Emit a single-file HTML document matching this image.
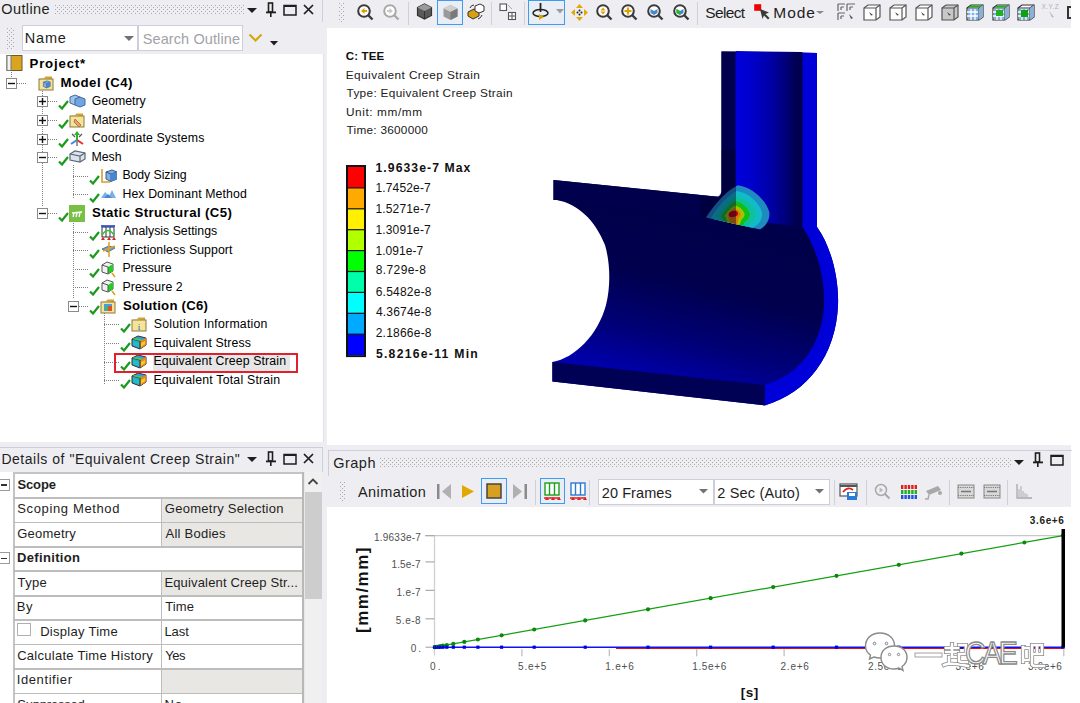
<!DOCTYPE html>
<html><head><meta charset="utf-8"><style>
html,body{margin:0;padding:0;}
body{width:1080px;height:703px;overflow:hidden;position:relative;background:#fff;font-family:"Liberation Sans",sans-serif;}
div{position:absolute;}
.t{white-space:nowrap;}
</style></head><body>
<div style="left:0px;top:0px;width:327px;height:703px;background:#eeeef2;"></div>
<div style="left:327px;top:0px;width:744px;height:28px;background:#eeeef2;"></div>
<div style="left:327px;top:445px;width:744px;height:62px;background:#eeeef2;"></div>
<div style="left:0px;top:54px;width:323px;height:388px;background:#fff;"></div>
<div style="left:0px;top:472px;width:305px;height:231px;background:#fff;"></div>
<div class="t" style="left:1.3px;top:1.9px;font-size:14.5px;line-height:14.5px;letter-spacing:0.396px;color:#1e1e1e;">Outline</div>
<svg style="position:absolute;left:55px;top:5px;" width="189" height="10" viewBox="0 0 189 10"><defs><pattern id="gp" width="4" height="4" patternUnits="userSpaceOnUse"><rect x="0" y="0" width="1" height="1" fill="#a9a9b0"/><rect x="2" y="2" width="1" height="1" fill="#a9a9b0"/></pattern></defs><rect width="189" height="10" fill="url(#gp)"/></svg>
<svg style="position:absolute;left:246.5px;top:7px;" width="11" height="7" viewBox="0 0 11 7"><path d="M0 1 L10 1 L5 6 Z" fill="#1e1e1e"/></svg>
<svg style="position:absolute;left:264.5px;top:2px;" width="12" height="15" viewBox="0 0 12 15"><rect x="3.5" y="1" width="4" height="9" fill="none" stroke="#1e1e1e" stroke-width="1.6"/><rect x="1" y="9.5" width="10" height="1.8" fill="#1e1e1e"/><rect x="5" y="11" width="1.6" height="4" fill="#1e1e1e"/></svg>
<svg style="position:absolute;left:282.5px;top:4px;" width="14" height="12" viewBox="0 0 14 12"><rect x="1" y="1.5" width="12" height="9.5" fill="none" stroke="#1e1e1e" stroke-width="1.5"/><rect x="1" y="1" width="12" height="2" fill="#1e1e1e"/></svg>
<svg style="position:absolute;left:302.5px;top:4px;" width="11" height="11" viewBox="0 0 11 11"><path d="M1 1 L10 10 M10 1 L1 10" stroke="#1e1e1e" stroke-width="1.7"/></svg>
<div style="left:322px;top:0px;width:1px;height:22px;background:#cccedb;"></div>
<svg style="position:absolute;left:7px;top:28px;" width="8" height="21" viewBox="0 0 8 21"><defs><pattern id="gp2" width="4" height="4" patternUnits="userSpaceOnUse"><rect x="0" y="0" width="1" height="1" fill="#a9a9b0"/><rect x="2" y="2" width="1" height="1" fill="#a9a9b0"/></pattern></defs><rect width="8" height="21" fill="url(#gp2)"/></svg>
<div style="left:22px;top:25px;width:116px;height:26px;box-sizing:border-box;border:1px solid #cccedb;background:#fff;"></div>
<div class="t" style="left:24.8px;top:30.7px;font-size:14.5px;line-height:14.5px;letter-spacing:0.811px;color:#1e1e1e;">Name</div>
<svg style="position:absolute;left:124px;top:36px;" width="10" height="6" viewBox="0 0 10 6"><path d="M0 0 L10 0 L5 5 Z" fill="#717171"/></svg>
<div style="left:138px;top:25px;width:105px;height:26px;box-sizing:border-box;border:1px solid #cccedb;background:#fff;"></div>
<div class="t" style="left:142.7px;top:31.5px;font-size:14.5px;line-height:14.5px;letter-spacing:0.104px;color:#a2a2a8;">Search Outline</div>
<svg style="position:absolute;left:248px;top:33px;" width="15" height="10" viewBox="0 0 15 10"><path d="M1.5 1.5 L7.5 7.5 L13.5 1.5" fill="none" stroke="#d3a70f" stroke-width="2.2"/></svg>
<svg style="position:absolute;left:270px;top:41px;" width="9" height="5" viewBox="0 0 9 5"><path d="M0 0 L8 0 L4 4.5 Z" fill="#1e1e1e"/></svg>
<svg style="position:absolute;left:11px;top:72px;" width="1" height="5" viewBox="0 0 1 5"><line x1="0.5" y1="0" x2="0.5" y2="5" stroke="#808080" stroke-width="1" stroke-dasharray="1 1"/></svg>
<svg style="position:absolute;left:42px;top:91px;" width="1" height="115" viewBox="0 0 1 115"><line x1="0.5" y1="0" x2="0.5" y2="115" stroke="#808080" stroke-width="1" stroke-dasharray="1 1"/></svg>
<svg style="position:absolute;left:73px;top:165px;" width="1" height="33" viewBox="0 0 1 33"><line x1="0.5" y1="0" x2="0.5" y2="33" stroke="#808080" stroke-width="1" stroke-dasharray="1 1"/></svg>
<svg style="position:absolute;left:73px;top:221px;" width="1" height="78" viewBox="0 0 1 78"><line x1="0.5" y1="0" x2="0.5" y2="78" stroke="#808080" stroke-width="1" stroke-dasharray="1 1"/></svg>
<svg style="position:absolute;left:104px;top:313px;" width="1" height="71" viewBox="0 0 1 71"><line x1="0.5" y1="0" x2="0.5" y2="71" stroke="#808080" stroke-width="1" stroke-dasharray="1 1"/></svg>
<div style="left:152.6px;top:355px;width:137px;height:15.5px;background:#e6e6e6;"></div>
<svg style="position:absolute;left:6px;top:55px;" width="17" height="17" viewBox="0 0 17 17"><rect x="1" y="0.5" width="15" height="15" fill="#d9a521" stroke="#6b5a30" stroke-width="1"/><rect x="1" y="0.5" width="4" height="15" fill="#f2f2f2" stroke="#777" stroke-width="1"/></svg>
<div class="t" style="left:29.5px;top:57.1px;font-size:13.2px;line-height:13.2px;letter-spacing:0.833px;color:#000;font-weight:bold;">Project*</div>
<svg style="position:absolute;left:38px;top:75px;" width="17" height="17" viewBox="0 0 17 17"><path d="M1 3 L6 3 L7.5 1.5 L14 1.5 L14 4 Z" fill="#d6a32a"/><rect x="1" y="4" width="14" height="11" fill="#f6e39a" stroke="#8b7a3a" stroke-width="1"/><g transform="translate(3.5,4) scale(0.62)"><path d="M3 5 L9 3 L14 5 L14 12 L8 14.5 L3 12 Z" fill="#7fb0e8" stroke="#3a5f8a" stroke-width="1"/><path d="M3 5 L8 7 L14 5" fill="none" stroke="#3a5f8a" stroke-width="1"/><path d="M8 7 L8 14.5" stroke="#3a5f8a" stroke-width="1"/><path d="M8 7 L14 5 L14 12 L8 14.5Z" fill="#4a86d0"/></g></svg>
<div style="left:6px;top:78px;width:11px;height:11px;box-sizing:border-box;border:1px solid #8a8a8a;background:#fff;"></div>
<svg style="position:absolute;left:8px;top:80px;" width="7" height="7" viewBox="0 0 7 7"><path d="M0 3.5 L7 3.5" stroke="#111" stroke-width="1.4"/></svg>
<svg style="position:absolute;left:17px;top:83px;" width="10" height="1" viewBox="0 0 10 1"><line x1="0" y1="0.5" x2="10" y2="0.5" stroke="#808080" stroke-width="1" stroke-dasharray="1 1"/></svg>
<div class="t" style="left:60.5px;top:75.7px;font-size:13.2px;line-height:13.2px;letter-spacing:0.500px;color:#000;font-weight:bold;">Model (C4)</div>
<svg style="position:absolute;left:69px;top:93px;" width="17" height="17" viewBox="0 0 17 17"><path d="M1 4 L6 2 L11 4 L11 10 L6 12 L1 10 Z" fill="#9cc3ee" stroke="#47699a"/><path d="M6 6 L11 4 L16 6 L16 12 L11 14 L6 12 Z" fill="#6fa5e3" stroke="#47699a"/></svg>
<svg style="position:absolute;left:58px;top:100px;" width="11" height="10" viewBox="0 0 11 10"><path d="M1 5.5 L4 8.5 L10 1" fill="none" stroke="#1a9a1a" stroke-width="2.2"/></svg>
<div style="left:37px;top:96px;width:11px;height:11px;box-sizing:border-box;border:1px solid #8a8a8a;background:#fff;"></div>
<svg style="position:absolute;left:39px;top:98px;" width="7" height="7" viewBox="0 0 7 7"><path d="M0 3.5 L7 3.5" stroke="#111" stroke-width="1.4"/><path d="M3.5 0 L3.5 7" stroke="#111" stroke-width="1.4"/></svg>
<svg style="position:absolute;left:48px;top:101px;" width="10" height="1" viewBox="0 0 10 1"><line x1="0" y1="0.5" x2="10" y2="0.5" stroke="#808080" stroke-width="1" stroke-dasharray="1 1"/></svg>
<div class="t" style="left:91.8px;top:95.0px;font-size:12.3px;line-height:12.3px;letter-spacing:-0.007px;color:#000;">Geometry</div>
<svg style="position:absolute;left:69px;top:112px;" width="17" height="17" viewBox="0 0 17 17"><path d="M1 3 L6 3 L7.5 1.5 L14 1.5 L14 4 Z" fill="#d6a32a"/><rect x="1" y="4" width="14" height="11" fill="#f6e39a" stroke="#8b7a3a" stroke-width="1"/><path d="M6 7 L12 13 L10 15 L5 10Z" fill="#f0a070" stroke="#9a6a3a" stroke-width="0.8"/></svg>
<svg style="position:absolute;left:58px;top:119px;" width="11" height="10" viewBox="0 0 11 10"><path d="M1 5.5 L4 8.5 L10 1" fill="none" stroke="#1a9a1a" stroke-width="2.2"/></svg>
<div style="left:37px;top:115px;width:11px;height:11px;box-sizing:border-box;border:1px solid #8a8a8a;background:#fff;"></div>
<svg style="position:absolute;left:39px;top:117px;" width="7" height="7" viewBox="0 0 7 7"><path d="M0 3.5 L7 3.5" stroke="#111" stroke-width="1.4"/><path d="M3.5 0 L3.5 7" stroke="#111" stroke-width="1.4"/></svg>
<svg style="position:absolute;left:48px;top:120px;" width="10" height="1" viewBox="0 0 10 1"><line x1="0" y1="0.5" x2="10" y2="0.5" stroke="#808080" stroke-width="1" stroke-dasharray="1 1"/></svg>
<div class="t" style="left:91.4px;top:113.6px;font-size:12.3px;line-height:12.3px;letter-spacing:0.055px;color:#000;">Materials</div>
<svg style="position:absolute;left:69px;top:131px;" width="17" height="17" viewBox="0 0 17 17"><path d="M8 1 L8 9" stroke="#2ab52a" stroke-width="2"/><path d="M5 4 L8 0 L11 4Z" fill="#2ab52a"/><path d="M8 9 L14 13" stroke="#e83030" stroke-width="2"/><path d="M8 9 L2 13" stroke="#3a8ae0" stroke-width="2"/><path d="M3 3 L6 6 M13 3 L10 6" stroke="#555" stroke-width="1.2"/><path d="M8 10 L8 15" stroke="#777" stroke-width="1.5"/></svg>
<svg style="position:absolute;left:58px;top:138px;" width="11" height="10" viewBox="0 0 11 10"><path d="M1 5.5 L4 8.5 L10 1" fill="none" stroke="#1a9a1a" stroke-width="2.2"/></svg>
<div style="left:37px;top:134px;width:11px;height:11px;box-sizing:border-box;border:1px solid #8a8a8a;background:#fff;"></div>
<svg style="position:absolute;left:39px;top:136px;" width="7" height="7" viewBox="0 0 7 7"><path d="M0 3.5 L7 3.5" stroke="#111" stroke-width="1.4"/><path d="M3.5 0 L3.5 7" stroke="#111" stroke-width="1.4"/></svg>
<svg style="position:absolute;left:48px;top:139px;" width="10" height="1" viewBox="0 0 10 1"><line x1="0" y1="0.5" x2="10" y2="0.5" stroke="#808080" stroke-width="1" stroke-dasharray="1 1"/></svg>
<div class="t" style="left:91.8px;top:132.2px;font-size:12.3px;line-height:12.3px;letter-spacing:0.105px;color:#000;">Coordinate Systems</div>
<svg style="position:absolute;left:69px;top:149px;" width="17" height="17" viewBox="0 0 17 17"><path d="M1 5 L6 2 L16 4 L16 10 L11 13 L1 11 Z" fill="#dde3ea" stroke="#5a6a7a" stroke-width="1.2"/><path d="M1 5 L11 7 L16 4 M11 7 L11 13" fill="none" stroke="#5a6a7a" stroke-width="1.2"/></svg>
<svg style="position:absolute;left:58px;top:156px;" width="11" height="10" viewBox="0 0 11 10"><path d="M1 5.5 L4 8.5 L10 1" fill="none" stroke="#1a9a1a" stroke-width="2.2"/></svg>
<div style="left:37px;top:152px;width:11px;height:11px;box-sizing:border-box;border:1px solid #8a8a8a;background:#fff;"></div>
<svg style="position:absolute;left:39px;top:154px;" width="7" height="7" viewBox="0 0 7 7"><path d="M0 3.5 L7 3.5" stroke="#111" stroke-width="1.4"/></svg>
<svg style="position:absolute;left:48px;top:157px;" width="10" height="1" viewBox="0 0 10 1"><line x1="0" y1="0.5" x2="10" y2="0.5" stroke="#808080" stroke-width="1" stroke-dasharray="1 1"/></svg>
<div class="t" style="left:91.4px;top:150.7px;font-size:12.3px;line-height:12.3px;letter-spacing:0.070px;color:#000;">Mesh</div>
<svg style="position:absolute;left:100px;top:168px;" width="17" height="17" viewBox="0 0 17 17"><path d="M2 1 L2 14 L10 14" fill="none" stroke="#d0a030" stroke-width="1.6"/><g transform="translate(3,-1)"><path d="M3 5 L9 3 L14 5 L14 12 L8 14.5 L3 12 Z" fill="#7fb0e8" stroke="#3a5f8a" stroke-width="1"/><path d="M3 5 L8 7 L14 5" fill="none" stroke="#3a5f8a" stroke-width="1"/><path d="M8 7 L8 14.5" stroke="#3a5f8a" stroke-width="1"/><path d="M8 7 L14 5 L14 12 L8 14.5Z" fill="#4a86d0"/></g></svg>
<svg style="position:absolute;left:89px;top:175px;" width="11" height="10" viewBox="0 0 11 10"><path d="M1 5.5 L4 8.5 L10 1" fill="none" stroke="#1a9a1a" stroke-width="2.2"/></svg>
<svg style="position:absolute;left:73px;top:176px;" width="16" height="1" viewBox="0 0 16 1"><line x1="0" y1="0.5" x2="16" y2="0.5" stroke="#808080" stroke-width="1" stroke-dasharray="1 1"/></svg>
<div class="t" style="left:122.4px;top:169.3px;font-size:12.3px;line-height:12.3px;letter-spacing:-0.066px;color:#000;">Body Sizing</div>
<svg style="position:absolute;left:100px;top:186px;" width="17" height="17" viewBox="0 0 17 17"><path d="M1 12 L5 6 L9 10 L12 4 L16 12 Z" fill="#7ab0ea"/><path d="M4 12 L8 8 L12 12Z" fill="#4a86d0"/></svg>
<svg style="position:absolute;left:89px;top:193px;" width="11" height="10" viewBox="0 0 11 10"><path d="M1 5.5 L4 8.5 L10 1" fill="none" stroke="#1a9a1a" stroke-width="2.2"/></svg>
<svg style="position:absolute;left:73px;top:194px;" width="16" height="1" viewBox="0 0 16 1"><line x1="0" y1="0.5" x2="16" y2="0.5" stroke="#808080" stroke-width="1" stroke-dasharray="1 1"/></svg>
<div class="t" style="left:122.4px;top:187.9px;font-size:12.3px;line-height:12.3px;letter-spacing:0.113px;color:#000;">Hex Dominant Method</div>
<svg style="position:absolute;left:69px;top:205px;" width="17" height="17" viewBox="0 0 17 17"><rect x="0" y="0" width="16" height="17" fill="#78c043"/><path d="M3 8 L13 7 M5 8 L4 12 M8 8 L7 12 M11 8 L10 12" stroke="#fff" stroke-width="1.3"/></svg>
<svg style="position:absolute;left:58px;top:212px;" width="11" height="10" viewBox="0 0 11 10"><path d="M1 5.5 L4 8.5 L10 1" fill="none" stroke="#1a9a1a" stroke-width="2.2"/></svg>
<div style="left:37px;top:208px;width:11px;height:11px;box-sizing:border-box;border:1px solid #8a8a8a;background:#fff;"></div>
<svg style="position:absolute;left:39px;top:210px;" width="7" height="7" viewBox="0 0 7 7"><path d="M0 3.5 L7 3.5" stroke="#111" stroke-width="1.4"/></svg>
<svg style="position:absolute;left:48px;top:213px;" width="10" height="1" viewBox="0 0 10 1"><line x1="0" y1="0.5" x2="10" y2="0.5" stroke="#808080" stroke-width="1" stroke-dasharray="1 1"/></svg>
<div class="t" style="left:92.0px;top:205.7px;font-size:13.2px;line-height:13.2px;letter-spacing:0.418px;color:#000;font-weight:bold;">Static Structural (C5)</div>
<svg style="position:absolute;left:100px;top:224px;" width="17" height="17" viewBox="0 0 17 17"><rect x="2" y="3" width="12" height="10" fill="none" stroke="#333" stroke-width="1"/><path d="M6 3 L6 13 M10 3 L10 13" stroke="#333" stroke-width="1"/><path d="M1 2 L15 2" stroke="#2040e0" stroke-width="1.6"/><path d="M2 11 Q8 2 14 11" fill="none" stroke="#30c030" stroke-width="1.6"/><path d="M1 16 L3 13 L5 16Z M7 16 L9 13 L11 16Z M12 16 L14 13 L16 16Z" fill="#e02020"/></svg>
<svg style="position:absolute;left:89px;top:231px;" width="11" height="10" viewBox="0 0 11 10"><path d="M1 5.5 L4 8.5 L10 1" fill="none" stroke="#1a9a1a" stroke-width="2.2"/></svg>
<svg style="position:absolute;left:73px;top:232px;" width="16" height="1" viewBox="0 0 16 1"><line x1="0" y1="0.5" x2="16" y2="0.5" stroke="#808080" stroke-width="1" stroke-dasharray="1 1"/></svg>
<div class="t" style="left:123.4px;top:225.1px;font-size:12.3px;line-height:12.3px;letter-spacing:0.006px;color:#000;">Analysis Settings</div>
<svg style="position:absolute;left:100px;top:242px;" width="17" height="17" viewBox="0 0 17 17"><path d="M2 7 L9 4 L15 6 L8 10 Z" fill="#6aa0e0" stroke="#3a5f8a" stroke-width="0.8"/><path d="M9 0 L9 15 M3 9 L15 4" stroke="#e0a020" stroke-width="1.5"/></svg>
<svg style="position:absolute;left:89px;top:249px;" width="11" height="10" viewBox="0 0 11 10"><path d="M1 5.5 L4 8.5 L10 1" fill="none" stroke="#1a9a1a" stroke-width="2.2"/></svg>
<svg style="position:absolute;left:73px;top:250px;" width="16" height="1" viewBox="0 0 16 1"><line x1="0" y1="0.5" x2="16" y2="0.5" stroke="#808080" stroke-width="1" stroke-dasharray="1 1"/></svg>
<div class="t" style="left:122.4px;top:243.6px;font-size:12.3px;line-height:12.3px;letter-spacing:0.069px;color:#000;">Frictionless Support</div>
<svg style="position:absolute;left:100px;top:261px;" width="17" height="17" viewBox="0 0 17 17"><path d="M2 4 L7 1 L13 3 L13 10 L8 13 L2 11 Z" fill="#f0f0f0" stroke="#555" stroke-width="1"/><path d="M8 6 L13 3 L13 10 L8 13Z" fill="#20d020"/><path d="M2 4 L8 6 L8 13" fill="none" stroke="#555" stroke-width="1"/><path d="M12 12 L15 16" stroke="#e0a020" stroke-width="1.6"/></svg>
<svg style="position:absolute;left:89px;top:268px;" width="11" height="10" viewBox="0 0 11 10"><path d="M1 5.5 L4 8.5 L10 1" fill="none" stroke="#1a9a1a" stroke-width="2.2"/></svg>
<svg style="position:absolute;left:73px;top:269px;" width="16" height="1" viewBox="0 0 16 1"><line x1="0" y1="0.5" x2="16" y2="0.5" stroke="#808080" stroke-width="1" stroke-dasharray="1 1"/></svg>
<div class="t" style="left:122.4px;top:262.2px;font-size:12.3px;line-height:12.3px;letter-spacing:-0.009px;color:#000;">Pressure</div>
<svg style="position:absolute;left:100px;top:279px;" width="17" height="17" viewBox="0 0 17 17"><path d="M2 4 L7 1 L13 3 L13 10 L8 13 L2 11 Z" fill="#f0f0f0" stroke="#555" stroke-width="1"/><path d="M8 6 L13 3 L13 10 L8 13Z" fill="#20d020"/><path d="M2 4 L8 6 L8 13" fill="none" stroke="#555" stroke-width="1"/><path d="M12 12 L15 16" stroke="#e0a020" stroke-width="1.6"/></svg>
<svg style="position:absolute;left:89px;top:286px;" width="11" height="10" viewBox="0 0 11 10"><path d="M1 5.5 L4 8.5 L10 1" fill="none" stroke="#1a9a1a" stroke-width="2.2"/></svg>
<svg style="position:absolute;left:73px;top:287px;" width="16" height="1" viewBox="0 0 16 1"><line x1="0" y1="0.5" x2="16" y2="0.5" stroke="#808080" stroke-width="1" stroke-dasharray="1 1"/></svg>
<div class="t" style="left:122.4px;top:280.8px;font-size:12.3px;line-height:12.3px;letter-spacing:0.095px;color:#000;">Pressure 2</div>
<svg style="position:absolute;left:100px;top:298px;" width="17" height="17" viewBox="0 0 17 17"><path d="M1 3 L6 3 L7.5 1.5 L14 1.5 L14 4 Z" fill="#d6a32a"/><rect x="1" y="4" width="14" height="11" fill="#f6e39a" stroke="#8b7a3a" stroke-width="1"/><rect x="4" y="6" width="8" height="7" fill="#40a0e0"/><rect x="8" y="8" width="4" height="5" fill="#e05030"/><rect x="5" y="9" width="3" height="3" fill="#40c040"/></svg>
<svg style="position:absolute;left:89px;top:305px;" width="11" height="10" viewBox="0 0 11 10"><path d="M1 5.5 L4 8.5 L10 1" fill="none" stroke="#1a9a1a" stroke-width="2.2"/></svg>
<div style="left:68px;top:301px;width:11px;height:11px;box-sizing:border-box;border:1px solid #8a8a8a;background:#fff;"></div>
<svg style="position:absolute;left:70px;top:303px;" width="7" height="7" viewBox="0 0 7 7"><path d="M0 3.5 L7 3.5" stroke="#111" stroke-width="1.4"/></svg>
<svg style="position:absolute;left:79px;top:306px;" width="10" height="1" viewBox="0 0 10 1"><line x1="0" y1="0.5" x2="10" y2="0.5" stroke="#808080" stroke-width="1" stroke-dasharray="1 1"/></svg>
<div class="t" style="left:123.0px;top:298.6px;font-size:13.2px;line-height:13.2px;letter-spacing:0.246px;color:#000;font-weight:bold;">Solution (C6)</div>
<svg style="position:absolute;left:131px;top:316px;" width="17" height="17" viewBox="0 0 17 17"><path d="M1 3 L6 3 L7.5 1.5 L14 1.5 L14 4 Z" fill="#d6a32a"/><rect x="1" y="4" width="14" height="11" fill="#f6e39a" stroke="#8b7a3a" stroke-width="1"/><text x="8" y="14" font-size="9" font-family="Liberation Serif" fill="#2060c0" text-anchor="middle">i</text></svg>
<svg style="position:absolute;left:120px;top:323px;" width="11" height="10" viewBox="0 0 11 10"><path d="M1 5.5 L4 8.5 L10 1" fill="none" stroke="#1a9a1a" stroke-width="2.2"/></svg>
<svg style="position:absolute;left:104px;top:324px;" width="16" height="1" viewBox="0 0 16 1"><line x1="0" y1="0.5" x2="16" y2="0.5" stroke="#808080" stroke-width="1" stroke-dasharray="1 1"/></svg>
<div class="t" style="left:153.8px;top:318.0px;font-size:12.3px;line-height:12.3px;letter-spacing:0.223px;color:#000;">Solution Information</div>
<svg style="position:absolute;left:131px;top:335px;" width="17" height="17" viewBox="0 0 17 17"><path d="M1 4 L7 1 L15 3 L15 10 L9 14 L1 11 Z" fill="#30a0e0" stroke="#333" stroke-width="1"/><path d="M9 6 L15 3 L15 10 L9 14Z" fill="#f08020"/><path d="M1 4 L9 6 L9 14" fill="none" stroke="#333" stroke-width="1"/><path d="M4 3 L11 4.5 L9 6 L1 4Z" fill="#40d040"/><path d="M10 8 L14 6 L14 9 L10 12Z" fill="#f0d020"/><path d="M2 6 L8 8 L8 12 L2 10Z" fill="#20c0c0"/></svg>
<svg style="position:absolute;left:120px;top:342px;" width="11" height="10" viewBox="0 0 11 10"><path d="M1 5.5 L4 8.5 L10 1" fill="none" stroke="#1a9a1a" stroke-width="2.2"/></svg>
<svg style="position:absolute;left:104px;top:343px;" width="16" height="1" viewBox="0 0 16 1"><line x1="0" y1="0.5" x2="16" y2="0.5" stroke="#808080" stroke-width="1" stroke-dasharray="1 1"/></svg>
<div class="t" style="left:153.4px;top:336.5px;font-size:12.3px;line-height:12.3px;letter-spacing:0.114px;color:#000;">Equivalent Stress</div>
<svg style="position:absolute;left:131px;top:354px;" width="17" height="17" viewBox="0 0 17 17"><path d="M1 4 L7 1 L15 3 L15 10 L9 14 L1 11 Z" fill="#30a0e0" stroke="#333" stroke-width="1"/><path d="M9 6 L15 3 L15 10 L9 14Z" fill="#f08020"/><path d="M1 4 L9 6 L9 14" fill="none" stroke="#333" stroke-width="1"/><path d="M4 3 L11 4.5 L9 6 L1 4Z" fill="#40d040"/><path d="M10 8 L14 6 L14 9 L10 12Z" fill="#f0d020"/><path d="M2 6 L8 8 L8 12 L2 10Z" fill="#20c0c0"/></svg>
<svg style="position:absolute;left:120px;top:361px;" width="11" height="10" viewBox="0 0 11 10"><path d="M1 5.5 L4 8.5 L10 1" fill="none" stroke="#1a9a1a" stroke-width="2.2"/></svg>
<svg style="position:absolute;left:104px;top:362px;" width="16" height="1" viewBox="0 0 16 1"><line x1="0" y1="0.5" x2="16" y2="0.5" stroke="#808080" stroke-width="1" stroke-dasharray="1 1"/></svg>
<div class="t" style="left:153.4px;top:355.1px;font-size:12.3px;line-height:12.3px;letter-spacing:0.123px;color:#000;">Equivalent Creep Strain</div>
<svg style="position:absolute;left:131px;top:372px;" width="17" height="17" viewBox="0 0 17 17"><path d="M1 4 L7 1 L15 3 L15 10 L9 14 L1 11 Z" fill="#30a0e0" stroke="#333" stroke-width="1"/><path d="M9 6 L15 3 L15 10 L9 14Z" fill="#f08020"/><path d="M1 4 L9 6 L9 14" fill="none" stroke="#333" stroke-width="1"/><path d="M4 3 L11 4.5 L9 6 L1 4Z" fill="#40d040"/><path d="M10 8 L14 6 L14 9 L10 12Z" fill="#f0d020"/><path d="M2 6 L8 8 L8 12 L2 10Z" fill="#20c0c0"/></svg>
<svg style="position:absolute;left:120px;top:379px;" width="11" height="10" viewBox="0 0 11 10"><path d="M1 5.5 L4 8.5 L10 1" fill="none" stroke="#1a9a1a" stroke-width="2.2"/></svg>
<svg style="position:absolute;left:104px;top:380px;" width="16" height="1" viewBox="0 0 16 1"><line x1="0" y1="0.5" x2="16" y2="0.5" stroke="#808080" stroke-width="1" stroke-dasharray="1 1"/></svg>
<div class="t" style="left:153.4px;top:373.7px;font-size:12.3px;line-height:12.3px;letter-spacing:0.210px;color:#000;">Equivalent Total Strain</div>
<div style="left:113.5px;top:352.5px;width:184px;height:20.5px;box-sizing:border-box;border:2px solid #e0202a;background:transparent;"></div>
<div style="left:323px;top:54px;width:1px;height:388px;background:#e0e0e6;"></div>
<div style="left:0px;top:447px;width:323px;height:1px;background:#cccedb;"></div>
<div style="left:322px;top:447px;width:1px;height:25px;background:#cccedb;"></div>
<div class="t" style="left:1.4px;top:451.5px;font-size:14px;line-height:14px;letter-spacing:0.523px;color:#1e1e1e;">Details of &quot;Equivalent Creep Strain&quot;</div>
<svg style="position:absolute;left:246.5px;top:456px;" width="11" height="7" viewBox="0 0 11 7"><path d="M0 1 L10 1 L5 6 Z" fill="#1e1e1e"/></svg>
<svg style="position:absolute;left:264.5px;top:451px;" width="12" height="15" viewBox="0 0 12 15"><rect x="3.5" y="1" width="4" height="9" fill="none" stroke="#1e1e1e" stroke-width="1.6"/><rect x="1" y="9.5" width="10" height="1.8" fill="#1e1e1e"/><rect x="5" y="11" width="1.6" height="4" fill="#1e1e1e"/></svg>
<svg style="position:absolute;left:282.5px;top:453px;" width="14" height="12" viewBox="0 0 14 12"><rect x="1" y="1.5" width="12" height="9.5" fill="none" stroke="#1e1e1e" stroke-width="1.5"/><rect x="1" y="1" width="12" height="2" fill="#1e1e1e"/></svg>
<svg style="position:absolute;left:302.5px;top:453px;" width="11" height="11" viewBox="0 0 11 11"><path d="M1 1 L10 10 M10 1 L1 10" stroke="#1e1e1e" stroke-width="1.7"/></svg>
<div style="left:160.5px;top:497px;width:141.5px;height:24.700000000000045px;background:#e8e7e3;"></div>
<div style="left:160.5px;top:521.7px;width:141.5px;height:24.5px;background:#e8e7e3;"></div>
<div style="left:160.5px;top:570.3px;width:141.5px;height:24.700000000000045px;background:#e8e7e3;"></div>
<div style="left:160.5px;top:668.2px;width:141.5px;height:24.399999999999977px;background:#e8e7e3;"></div>
<div style="left:13px;top:472px;width:2px;height:231px;background:#c4c4c4;"></div>
<div style="left:13px;top:472px;width:290px;height:2px;background:#c4c4c4;"></div>
<div style="left:302px;top:472px;width:1.5px;height:231px;background:#b8b8b8;"></div>
<div style="left:13px;top:497px;width:289px;height:1.5px;background:#bdbdbd;"></div>
<div style="left:13px;top:521.7px;width:289px;height:1.5px;background:#bdbdbd;"></div>
<div style="left:13px;top:546.2px;width:289px;height:1.5px;background:#bdbdbd;"></div>
<div style="left:13px;top:570.3px;width:289px;height:1.5px;background:#bdbdbd;"></div>
<div style="left:13px;top:595px;width:289px;height:1.5px;background:#bdbdbd;"></div>
<div style="left:13px;top:619.4px;width:289px;height:1.5px;background:#bdbdbd;"></div>
<div style="left:13px;top:643.9px;width:289px;height:1.5px;background:#bdbdbd;"></div>
<div style="left:13px;top:668.2px;width:289px;height:1.5px;background:#bdbdbd;"></div>
<div style="left:13px;top:692.6px;width:289px;height:1.5px;background:#bdbdbd;"></div>
<div style="left:160.5px;top:497px;width:1.5px;height:24.700000000000045px;background:#bdbdbd;"></div>
<div style="left:160.5px;top:521.7px;width:1.5px;height:24.5px;background:#bdbdbd;"></div>
<div style="left:160.5px;top:570.3px;width:1.5px;height:24.700000000000045px;background:#bdbdbd;"></div>
<div style="left:160.5px;top:595px;width:1.5px;height:24.399999999999977px;background:#bdbdbd;"></div>
<div style="left:160.5px;top:619.4px;width:1.5px;height:24.5px;background:#bdbdbd;"></div>
<div style="left:160.5px;top:643.9px;width:1.5px;height:24.300000000000068px;background:#bdbdbd;"></div>
<div style="left:160.5px;top:668.2px;width:1.5px;height:24.399999999999977px;background:#bdbdbd;"></div>
<div style="left:160.5px;top:692.6px;width:1.5px;height:24.399999999999977px;background:#bdbdbd;"></div>
<div style="left:-2px;top:478.7px;width:12px;height:12px;box-sizing:border-box;border:1px solid #9a9a9a;background:#fff;"></div>
<div style="left:1px;top:484.2px;width:6px;height:1.5px;background:#333;"></div>
<div style="left:-2px;top:552.25px;width:12px;height:12px;box-sizing:border-box;border:1px solid #9a9a9a;background:#fff;"></div>
<div style="left:1px;top:557.75px;width:6px;height:1.5px;background:#333;"></div>
<div class="t" style="left:17.5px;top:477.5px;font-size:13px;line-height:13px;letter-spacing:-0.147px;color:#1e1e1e;font-weight:bold;">Scope</div>
<div class="t" style="left:17.3px;top:502.2px;font-size:13px;line-height:13px;letter-spacing:0.629px;color:#1e1e1e;">Scoping Method</div>
<div class="t" style="left:164.8px;top:502.2px;font-size:13px;line-height:13px;letter-spacing:0.266px;color:#1e1e1e;">Geometry Selection</div>
<div class="t" style="left:17.2px;top:526.9px;font-size:13px;line-height:13px;letter-spacing:0.230px;color:#1e1e1e;">Geometry</div>
<div class="t" style="left:165.5px;top:526.9px;font-size:13px;line-height:13px;letter-spacing:0.252px;color:#1e1e1e;">All Bodies</div>
<div class="t" style="left:17.0px;top:551.4px;font-size:13px;line-height:13px;letter-spacing:0.347px;color:#1e1e1e;font-weight:bold;">Definition</div>
<div class="t" style="left:17.6px;top:575.5px;font-size:13px;line-height:13px;letter-spacing:0.356px;color:#1e1e1e;">Type</div>
<div class="t" style="left:164.4px;top:575.5px;font-size:13px;line-height:13px;letter-spacing:0.158px;color:#1e1e1e;">Equivalent Creep Str...</div>
<div class="t" style="left:16.8px;top:600.2px;font-size:13px;line-height:13px;letter-spacing:0.428px;color:#1e1e1e;">By</div>
<div class="t" style="left:165.2px;top:600.2px;font-size:13px;line-height:13px;letter-spacing:0.147px;color:#1e1e1e;">Time</div>
<div class="t" style="left:40.2px;top:624.6px;font-size:13px;line-height:13px;letter-spacing:0.276px;color:#1e1e1e;">Display Time</div>
<div class="t" style="left:164.4px;top:624.6px;font-size:13px;line-height:13px;letter-spacing:-0.033px;color:#1e1e1e;">Last</div>
<div class="t" style="left:17.2px;top:649.1px;font-size:13px;line-height:13px;letter-spacing:0.269px;color:#1e1e1e;">Calculate Time History</div>
<div class="t" style="left:165.2px;top:649.1px;font-size:13px;line-height:13px;letter-spacing:-0.487px;color:#1e1e1e;">Yes</div>
<div class="t" style="left:16.7px;top:673.4px;font-size:13px;line-height:13px;letter-spacing:0.605px;color:#1e1e1e;">Identifier</div>
<div class="t" style="left:17.3px;top:697.8px;font-size:13px;line-height:13px;letter-spacing:-0.218px;color:#1e1e1e;">Suppressed</div>
<div class="t" style="left:164.4px;top:697.8px;font-size:13px;line-height:13px;letter-spacing:0.985px;color:#1e1e1e;">No</div>
<div style="left:17.4px;top:623px;width:13.5px;height:13px;box-sizing:border-box;border:1px solid #b0b0b0;background:#fff;"></div>
<div style="left:303.5px;top:472px;width:1.5px;height:231px;background:#e8e8ec;"></div>
<div style="left:305px;top:472px;width:17px;height:231px;background:#f0f0f0;"></div>
<div style="left:305px;top:492px;width:17px;height:107px;background:#cdcdcd;"></div>
<svg style="position:absolute;left:307px;top:477px;" width="12" height="9" viewBox="0 0 12 9"><path d="M1.5 7 L6 2.5 L10.5 7" fill="none" stroke="#444" stroke-width="1.8"/></svg>
<svg style="position:absolute;left:339px;top:3px;" width="6" height="20" viewBox="0 0 6 20"><defs><pattern id="gt1" width="4" height="4" patternUnits="userSpaceOnUse"><rect x="0" y="0" width="1" height="1" fill="#a9a9b0"/><rect x="2" y="2" width="1" height="1" fill="#a9a9b0"/></pattern></defs><rect width="6" height="20" fill="url(#gt1)"/></svg>
<svg style="position:absolute;left:356.3px;top:3.0999999999999996px;" width="18" height="18" viewBox="0 0 18 18"><circle cx="8" cy="8" r="5.8" fill="#fff" stroke="#3a3a3a" stroke-width="2"/><path d="M12 12 L16.5 16.5" stroke="#3a3a3a" stroke-width="2.4"/><path d="M5 8 L8.5 5 L8.5 7 L11 7 L11 9 L8.5 9 L8.5 11 Z" fill="#e0a000"/></svg>
<svg style="position:absolute;left:382.2px;top:3.0999999999999996px;" width="18" height="18" viewBox="0 0 18 18"><circle cx="8" cy="8" r="5.8" fill="#fff" stroke="#a8a8a8" stroke-width="2"/><path d="M12 12 L16.5 16.5" stroke="#a8a8a8" stroke-width="2.4"/><path d="M11 8 L7.5 5 L7.5 7 L5 7 L5 9 L7.5 9 L7.5 11 Z" fill="#c8c8c8"/></svg>
<div style="left:407.8px;top:2px;width:1px;height:23px;background:#cfd0d8;"></div>
<svg style="position:absolute;left:416px;top:3px;" width="17" height="17" viewBox="0 0 17 17"><path d="M1.5 4.5 L8.5 1 L15.5 4.5 L15.5 12.5 L8.5 16 L1.5 12.5Z" fill="#5a5a5a" stroke="#333" stroke-width="1.2"/><path d="M1.5 4.5 L8.5 8 L15.5 4.5 L8.5 1Z" fill="#9a9a9a"/><path d="M8.5 8 L8.5 16" stroke="#333" stroke-width="1"/></svg>
<div style="left:437px;top:0px;width:25.5px;height:24.5px;box-sizing:border-box;border:1.5px solid #3d9bf0;background:#e9eef6;"></div>
<svg style="position:absolute;left:441.5px;top:3.5px;" width="17" height="17" viewBox="0 0 17 17"><path d="M1.5 4.5 L8.5 1 L15.5 4.5 L15.5 12.5 L8.5 16 L1.5 12.5Z" fill="#9a9a9a"/><path d="M1.5 4.5 L8.5 8 L15.5 4.5 L8.5 1Z" fill="#cfcfcf"/><path d="M8.5 8 L15.5 4.5 L15.5 12.5 L8.5 16Z" fill="#7a7a7a"/></svg>
<svg style="position:absolute;left:467px;top:3px;" width="18" height="18" viewBox="0 0 18 18"><path d="M1 9 L7 6 L12 8 L12 13 L6 16 L1 13Z" fill="#d8a010" stroke="#333" stroke-width="1"/><path d="M8 3 L13 1 L17 3 L17 8 L12 10 L8 8Z" fill="#fff" stroke="#333" stroke-width="1"/><path d="M3 5 Q4 2 7 2 M15 12 Q14 15 11 16" fill="none" stroke="#333" stroke-width="1"/></svg>
<div style="left:491.1px;top:2px;width:1px;height:23px;background:#cfd0d8;"></div>
<svg style="position:absolute;left:499px;top:3px;" width="18" height="18" viewBox="0 0 18 18"><rect x="1" y="1" width="6.5" height="6.5" fill="#fff" stroke="#555" stroke-width="1.1"/><rect x="9.5" y="9.5" width="7" height="7" fill="#fff" stroke="#555" stroke-width="1.1"/><path d="M13 9.5 L13 16.5 M9.5 13 L16.5 13" stroke="#555" stroke-width="1"/><path d="M9 2 L13 6" stroke="#aaa" stroke-width="1"/></svg>
<div style="left:523.5px;top:2px;width:1px;height:23px;background:#cfd0d8;"></div>
<div style="left:527.8px;top:0px;width:37.6px;height:24.5px;box-sizing:border-box;border:1.5px solid #3d9bf0;background:#e9eef6;"></div>
<svg style="position:absolute;left:531px;top:2px;" width="20" height="20" viewBox="0 0 20 20"><path d="M9.5 1 L9.5 10" stroke="#222" stroke-width="1.8"/><ellipse cx="9.5" cy="11" rx="7.5" ry="3.6" fill="none" stroke="#222" stroke-width="1.5"/><path d="M8 12 L13 15 L8 18Z" fill="#e0a000"/></svg>
<svg style="position:absolute;left:555.5px;top:9px;" width="9" height="6" viewBox="0 0 9 6"><path d="M0 0 L8 0 L4 4.5Z" fill="#9a9a9a"/></svg>
<svg style="position:absolute;left:571px;top:3.5px;" width="17" height="17" viewBox="0 0 17 17"><path d="M8.5 0 L12 4 L5 4Z M8.5 17 L12 13 L5 13Z M0 8.5 L4 5 L4 12Z M17 8.5 L13 5 L13 12Z" fill="#e0a800"/><circle cx="6.5" cy="8.5" r="1" fill="#222"/><circle cx="10.5" cy="8.5" r="1" fill="#222"/><circle cx="8.5" cy="6.5" r="1" fill="#222"/><circle cx="8.5" cy="10.5" r="1" fill="#222"/></svg>
<svg style="position:absolute;left:595.3px;top:3.0999999999999996px;" width="18" height="18" viewBox="0 0 18 18"><circle cx="8" cy="8" r="5.8" fill="#fff" stroke="#3a3a3a" stroke-width="2"/><path d="M12 12 L16.5 16.5" stroke="#3a3a3a" stroke-width="2.4"/><path d="M5.5 7.5 L8 4.5 L10.5 7.5Z M5.5 8.5 L8 11.5 L10.5 8.5Z" fill="#e0a000"/></svg>
<svg style="position:absolute;left:620.3px;top:3.0999999999999996px;" width="18" height="18" viewBox="0 0 18 18"><circle cx="8" cy="8" r="5.8" fill="#fff" stroke="#3a3a3a" stroke-width="2"/><path d="M12 12 L16.5 16.5" stroke="#3a3a3a" stroke-width="2.4"/><path d="M8 4.5 L8 11.5 M4.5 8 L11.5 8" stroke="#e0a000" stroke-width="2.2"/></svg>
<svg style="position:absolute;left:646.3px;top:3.0999999999999996px;" width="18" height="18" viewBox="0 0 18 18"><circle cx="8" cy="8" r="5.8" fill="#fff" stroke="#3a3a3a" stroke-width="2"/><path d="M12 12 L16.5 16.5" stroke="#3a3a3a" stroke-width="2.4"/><path d="M4.5 6 L8 8 L11.5 6 L11.5 10 L8 12 L4.5 10Z" fill="#4a86d0"/></svg>
<svg style="position:absolute;left:672.2px;top:3.0999999999999996px;" width="18" height="18" viewBox="0 0 18 18"><circle cx="8" cy="8" r="5.8" fill="#fff" stroke="#3a3a3a" stroke-width="2"/><path d="M12 12 L16.5 16.5" stroke="#3a3a3a" stroke-width="2.4"/><path d="M4.5 6 L8 8 L11.5 6 L11.5 10 L8 12 L4.5 10Z" fill="#4a86d0"/><path d="M4.5 6 L8 8 L8 12 L4.5 10Z" fill="#20c020"/></svg>
<div style="left:696.9px;top:2px;width:1px;height:23px;background:#cfd0d8;"></div>
<div class="t" style="left:705.3px;top:5.0px;font-size:15.5px;line-height:15.5px;letter-spacing:-0.655px;color:#1e1e1e;">Select</div>
<svg style="position:absolute;left:753px;top:3px;" width="18" height="18" viewBox="0 0 18 18"><rect x="1.2" y="1.2" width="7" height="6.6" fill="#f00000"/><path d="M7 6 L16 9.5 L12.5 11 L16.5 15 L15 16.5 L11 12.5 L9.5 16Z" fill="#3a3a3a"/></svg>
<div class="t" style="left:773.3px;top:5.0px;font-size:15.5px;line-height:15.5px;letter-spacing:0.963px;color:#1e1e1e;">Mode</div>
<svg style="position:absolute;left:816px;top:10.5px;" width="9" height="5" viewBox="0 0 9 5"><path d="M0 0 L8 0 L4 3Z" fill="#888"/></svg>
<svg style="position:absolute;left:836.5px;top:3px;" width="19" height="18" viewBox="0 0 19 18"><path d="M1 1 L8 1 M1 1 L1 8 M10 1 L18 1 M10 1 L10 8 M1 10 L8 10 M1 10 L1 17 M4 4 L7 4 M4 4 L4 7 M13 4 L16 4 M13 4 L13 7 M4 13 L7 13 M4 13 L4 16" stroke="#666" stroke-width="1.2" fill="none"/><path d="M12 11 L16 15 L14 16Z" fill="#555"/></svg>
<svg style="position:absolute;left:863px;top:3.5px;" width="18" height="18" viewBox="0 0 18 18"><path d="M1 4 L5 1 L17 1 L17 13 L13 16 L1 16Z" fill="#fff" stroke="#555" stroke-width="1.2"/><path d="M1 4 L13 4 L17 1 M13 4 L13 16" fill="none" stroke="#555" stroke-width="1.2"/><path d="M6 8 L10 11 L8 11.5Z" fill="#444"/></svg>
<svg style="position:absolute;left:889px;top:3.5px;" width="18" height="18" viewBox="0 0 18 18"><path d="M1 4 L5 1 L17 1 L17 13 L13 16 L1 16Z" fill="#fff" stroke="#555" stroke-width="1.2"/><path d="M1 4 L13 4 L17 1 M13 4 L13 16" fill="none" stroke="#555" stroke-width="1.2"/><path d="M6 8 L10 11 L8 11.5Z" fill="#444"/></svg>
<svg style="position:absolute;left:914.5px;top:3.5px;" width="18" height="18" viewBox="0 0 18 18"><path d="M1 4 L5 1 L17 1 L17 13 L13 16 L1 16Z" fill="#fff" stroke="#555" stroke-width="1.2"/><path d="M1 4 L13 4 L17 1 M13 4 L13 16" fill="none" stroke="#555" stroke-width="1.2"/><path d="M6 8 L10 11 L8 11.5Z" fill="#444"/></svg>
<svg style="position:absolute;left:940.5px;top:3.5px;" width="18" height="18" viewBox="0 0 18 18"><path d="M1 4 L5 1 L17 1 L17 13 L13 16 L1 16Z" fill="#c8c8c8" stroke="#555" stroke-width="1.2"/><path d="M1 4 L13 4 L17 1 M13 4 L13 16" fill="none" stroke="#555" stroke-width="1.2"/><path d="M6 8 L10 11 L8 11.5Z" fill="#444"/></svg>
<svg style="position:absolute;left:965.5px;top:3.5px;" width="18" height="18" viewBox="0 0 18 18"><path d="M1 4 L5 1 L17 1 L17 13 L13 16 L1 16Z" fill="#fff" stroke="#333" stroke-width="1.2"/><rect x="2" y="5" width="10" height="10" fill="#7ab4f0"/><path d="M5 4 L5 16 M9 4 L9 16 M1 8 L13 8 M1 12 L13 12" stroke="#fff" stroke-width="1.3"/><path d="M1 4 L13 4 L17 1 M13 4 L13 16" fill="none" stroke="#333" stroke-width="1.2"/><path d="M13 4 L17 1 L17 13 L13 16Z" fill="#8ab0d8"/><path d="M2 3.5 L5.5 1.5 L16 1.5 L12.5 3.5Z" fill="#20b020"/></svg>
<svg style="position:absolute;left:991.5px;top:3.5px;" width="18" height="18" viewBox="0 0 18 18"><path d="M1 4 L5 1 L17 1 L17 13 L13 16 L1 16Z" fill="#fff" stroke="#333" stroke-width="1.2"/><rect x="2" y="5" width="10" height="10" fill="#7ab4f0"/><path d="M5 4 L5 16 M9 4 L9 16 M1 8 L13 8 M1 12 L13 12" stroke="#fff" stroke-width="1.3"/><path d="M1 4 L13 4 L17 1 M13 4 L13 16" fill="none" stroke="#333" stroke-width="1.2"/><path d="M13 4 L17 1 L17 13 L13 16Z" fill="#8ab0d8"/><path d="M2 3.5 L5.5 1.5 L16 1.5 L12.5 3.5Z" fill="#20b020"/><rect x="4" y="6" width="7" height="6" fill="#20b020"/></svg>
<svg style="position:absolute;left:1016.5px;top:3.5px;" width="18" height="18" viewBox="0 0 18 18"><path d="M1 4 L5 1 L17 1 L17 13 L13 16 L1 16Z" fill="#fff" stroke="#333" stroke-width="1.2"/><rect x="2" y="5" width="10" height="10" fill="#7ab4f0"/><path d="M5 4 L5 16 M9 4 L9 16 M1 8 L13 8 M1 12 L13 12" stroke="#fff" stroke-width="1.3"/><path d="M1 4 L13 4 L17 1 M13 4 L13 16" fill="none" stroke="#333" stroke-width="1.2"/><path d="M13 4 L17 1 L17 13 L13 16Z" fill="#8ab0d8"/><rect x="4" y="6" width="7" height="7" fill="#10a010"/></svg>
<div class="t" style="left:1041.4px;top:3.5px;font-size:6.5px;line-height:6.5px;letter-spacing:0.484px;color:#b0b0b0;">X.Y.Z</div>
<svg style="position:absolute;left:1048px;top:10px;" width="8" height="10" viewBox="0 0 8 10"><path d="M1 1 L6 7 L4 7.5Z" fill="#b8b8b8"/></svg>
<div style="left:1067px;top:6px;width:1.8px;height:13px;background:#333;"></div>
<div style="left:1067px;top:6px;width:4px;height:1.8px;background:#333;"></div>
<div style="left:1067px;top:17.2px;width:4px;height:1.8px;background:#333;"></div>
<div class="t" style="left:345.8px;top:51.0px;font-size:11.5px;line-height:11.5px;letter-spacing:0.126px;color:#111;font-weight:bold;">C: TEE</div>
<div class="t" style="left:345.8px;top:70.0px;font-size:11.8px;line-height:11.8px;letter-spacing:0.432px;color:#202020;">Equivalent Creep Strain</div>
<div class="t" style="left:346.5px;top:88.3px;font-size:11.8px;line-height:11.8px;letter-spacing:0.330px;color:#202020;">Type: Equivalent Creep Strain</div>
<div class="t" style="left:345.9px;top:106.7px;font-size:11.8px;line-height:11.8px;letter-spacing:0.606px;color:#202020;">Unit: mm/mm</div>
<div class="t" style="left:346.5px;top:125.0px;font-size:11.8px;line-height:11.8px;letter-spacing:0.262px;color:#202020;">Time: 3600000</div>
<svg style="position:absolute;left:346.3px;top:165.0px;" width="20" height="193" viewBox="0 0 20 193"><rect x="2" y="2.00" width="16" height="20.90" fill="#ff0000"/><rect x="2" y="22.90" width="16" height="20.90" fill="#ffaa00"/><rect x="2" y="43.80" width="16" height="20.90" fill="#fff000"/><rect x="2" y="64.70" width="16" height="20.90" fill="#b2ff00"/><rect x="2" y="85.60" width="16" height="20.90" fill="#00ff00"/><rect x="2" y="106.50" width="16" height="20.90" fill="#00ffaa"/><rect x="2" y="127.40" width="16" height="20.90" fill="#00ffff"/><rect x="2" y="148.30" width="16" height="20.90" fill="#00aaff"/><rect x="2" y="169.20" width="16" height="20.90" fill="#0000ff"/><rect x="2" y="22.30" width="16" height="1.2" fill="#111"/><rect x="2" y="43.20" width="16" height="1.2" fill="#111"/><rect x="2" y="64.10" width="16" height="1.2" fill="#111"/><rect x="2" y="85.00" width="16" height="1.2" fill="#111"/><rect x="2" y="105.90" width="16" height="1.2" fill="#111"/><rect x="2" y="126.80" width="16" height="1.2" fill="#111"/><rect x="2" y="147.70" width="16" height="1.2" fill="#111"/><rect x="2" y="168.60" width="16" height="1.2" fill="#111"/><rect x="1" y="1" width="18" height="190.10" fill="none" stroke="#111" stroke-width="2"/></svg>
<div class="t" style="left:375.5px;top:162.2px;font-size:12.2px;line-height:12.2px;letter-spacing:1.067px;color:#111;font-weight:bold;">1.9633e-7 Max</div>
<div class="t" style="left:375.4px;top:181.8px;font-size:12px;line-height:12px;letter-spacing:0.159px;color:#111;">1.7452e-7</div>
<div class="t" style="left:375.4px;top:202.8px;font-size:12px;line-height:12px;letter-spacing:0.159px;color:#111;">1.5271e-7</div>
<div class="t" style="left:375.4px;top:223.7px;font-size:12px;line-height:12px;letter-spacing:0.159px;color:#111;">1.3091e-7</div>
<div class="t" style="left:375.4px;top:244.6px;font-size:12px;line-height:12px;letter-spacing:0.061px;color:#111;">1.091e-7</div>
<div class="t" style="left:375.8px;top:264.4px;font-size:12px;line-height:12px;letter-spacing:0.379px;color:#111;">8.729e-8</div>
<div class="t" style="left:375.7px;top:285.5px;font-size:12px;line-height:12px;letter-spacing:0.223px;color:#111;">6.5482e-8</div>
<div class="t" style="left:376.0px;top:305.8px;font-size:12px;line-height:12px;letter-spacing:0.181px;color:#111;">4.3674e-8</div>
<div class="t" style="left:375.7px;top:326.9px;font-size:12px;line-height:12px;letter-spacing:0.223px;color:#111;">2.1866e-8</div>
<div class="t" style="left:375.9px;top:347.8px;font-size:12.2px;line-height:12.2px;letter-spacing:1.272px;color:#111;font-weight:bold;">5.8216e-11 Min</div>
<svg style="position:absolute;left:0px;top:0px;pointer-events:none" width="1080" height="703" viewBox="0 0 1080 703"><defs>
<linearGradient id="gpipe" gradientUnits="userSpaceOnUse" x1="735.5" y1="0" x2="802.5" y2="0">
<stop offset="0" stop-color="#0000dc"/><stop offset="0.2" stop-color="#0000d0"/><stop offset="0.5" stop-color="#0000aa"/><stop offset="0.75" stop-color="#00007a"/><stop offset="0.9" stop-color="#000052"/><stop offset="1" stop-color="#00004a"/></linearGradient>
<linearGradient id="gcyl" gradientUnits="userSpaceOnUse" x1="690" y1="225" x2="650" y2="390">
<stop offset="0" stop-color="#00004a"/><stop offset="0.35" stop-color="#00004e"/><stop offset="0.68" stop-color="#000078"/><stop offset="1" stop-color="#0000b8"/></linearGradient>
<clipPath id="cc"><path d="M700 197.5 L718 196.8 L721.5 192 L721.5 150 L802 150 L802 229 L760 229.5 L706 217.5 L700 216 Z"/></clipPath>
</defs>
<path d="M553.5 180 L718 196.8 Q721 196 721.5 192 L721.5 51.5 L817 53 L817 227 C832 248 839 280 838 305 C836 355 808 393 764.7 405.4 L552.4 381.6 L552.4 362 C575 358 598 335 606 305 C611 285 610 262 605 245 C595 220 578 204 557 200 L553.5 200 Z" fill="url(#gcyl)"/>
<path d="M553.5 180 L718 196.8 Q721 196 721.5 192 L721.5 51.5 L735.5 51.5 L735.5 219 L706 217 L620 207 L557 200 L553.5 200 Z" fill="#00004c"/>
<path d="M735.5 51 L802.5 52 L802.5 227 L735.5 219 Z" fill="url(#gpipe)"/>
<path d="M802.5 52.5 L817 53 L817 227 L802.5 227 Z" fill="#0000d8"/>
<path d="M817 227 C832 248 839 280 838 305 C836 355 808 393 764.7 405.4 L764.7 385 C800 375 822 345 824 305 C825 280 818 250 802.5 227 Z" fill="#0000d8"/>
<path d="M552.4 362 L764.7 385 L764.7 405.4 L552.4 381.6 Z" fill="#000054"/>
<g clip-path="url(#cc)">
<path d="M706.0 217.5 C712.0 208.0 724.0 192.0 737.7 185.2 C752.0 187.0 766.0 200.0 769.3 212.0 C770.0 220.0 766.0 226.0 760.0 229.5 L733.5 240 Z" fill="#1f8ac0"/>
<path d="M711.5 216.9 C716.3 209.3 725.9 196.5 736.9 191.1 C748.3 192.5 759.5 202.9 762.1 212.5 C762.7 218.9 759.5 223.7 754.7 226.5 L733.5 240 Z" fill="#10bcc8"/>
<path d="M716.5 216.4 C720.2 210.5 727.6 200.6 736.1 196.3 C745.0 197.4 753.6 205.5 755.7 212.9 C756.1 217.9 753.6 221.6 749.9 223.8 L733.5 240 Z" fill="#10c09c"/>
<path d="M721.1 215.8 C723.8 211.6 729.2 204.4 735.4 201.3 C741.8 202.1 748.1 208.0 749.6 213.4 C749.9 217.0 748.1 219.7 745.4 221.2 L733.5 240 Z" fill="#12c012"/>
<path d="M725.0 215.4 C726.8 212.5 730.6 207.5 734.8 205.4 C739.2 206.0 743.6 210.0 744.6 213.7 C744.8 216.2 743.6 218.1 741.7 219.2 L733.5 240 Z" fill="#a8c000"/>
<path d="M728.0 215.1 C729.2 213.2 731.6 210.0 734.3 208.6 C737.2 209.0 740.0 211.6 740.7 214.0 C740.8 215.6 740.0 216.8 738.8 217.5 L733.5 240 Z" fill="#d88000"/>
<ellipse cx="733.4" cy="213.9" rx="4.8" ry="3" fill="#c00000" transform="rotate(-15 733.4 213.9)"/>
<path d="M700 150 L736 150 L736 235 L700 235Z" fill="#000030" opacity="0.42"/>
</g>
</svg>
<div style="left:327.5px;top:449.8px;width:744px;height:1px;background:#cccedb;"></div>
<div style="left:327.5px;top:449.8px;width:1px;height:26px;background:#cccedb;"></div>
<div class="t" style="left:333.3px;top:455.7px;font-size:14.5px;line-height:14.5px;letter-spacing:0.464px;color:#1e1e1e;">Graph</div>
<svg style="position:absolute;left:380px;top:458px;" width="632" height="10" viewBox="0 0 632 10"><defs><pattern id="gg1" width="4" height="4" patternUnits="userSpaceOnUse"><rect x="0" y="0" width="1" height="1" fill="#a9a9b0"/><rect x="2" y="2" width="1" height="1" fill="#a9a9b0"/></pattern></defs><rect width="632" height="10" fill="url(#gg1)"/></svg>
<svg style="position:absolute;left:1014px;top:460px;" width="11" height="7" viewBox="0 0 11 7"><path d="M0 0 L10 0 L5 5 Z" fill="#1e1e1e"/></svg>
<svg style="position:absolute;left:1031.5px;top:452px;" width="12" height="15" viewBox="0 0 12 15"><rect x="3.5" y="1" width="4" height="9" fill="none" stroke="#1e1e1e" stroke-width="1.6"/><rect x="1" y="9.5" width="10" height="1.8" fill="#1e1e1e"/><rect x="5" y="11" width="1.6" height="4" fill="#1e1e1e"/></svg>
<svg style="position:absolute;left:1049.5px;top:454px;" width="14" height="12" viewBox="0 0 14 12"><rect x="1" y="1.5" width="12" height="9.5" fill="none" stroke="#1e1e1e" stroke-width="1.5"/><rect x="1" y="1" width="12" height="2" fill="#1e1e1e"/></svg>
<svg style="position:absolute;left:340px;top:482px;" width="6" height="20" viewBox="0 0 6 20"><defs><pattern id="gg2" width="4" height="4" patternUnits="userSpaceOnUse"><rect x="0" y="0" width="1" height="1" fill="#a9a9b0"/><rect x="2" y="2" width="1" height="1" fill="#a9a9b0"/></pattern></defs><rect width="6" height="20" fill="url(#gg2)"/></svg>
<div class="t" style="left:358.0px;top:485.1px;font-size:14.5px;line-height:14.5px;letter-spacing:0.424px;color:#1e1e1e;">Animation</div>
<svg style="position:absolute;left:436px;top:483px;" width="16" height="17" viewBox="0 0 16 17"><rect x="1" y="1" width="2.5" height="15" fill="#8a8a8a"/><path d="M15 1 L6 8.5 L15 16Z" fill="#b0b0b0"/></svg>
<svg style="position:absolute;left:461px;top:484px;" width="14" height="15" viewBox="0 0 14 15"><path d="M1 1 L13 7.5 L1 14Z" fill="#e0a800"/></svg>
<div style="left:481px;top:478px;width:25.5px;height:25.5px;box-sizing:border-box;border:1.5px solid #3d9bf0;background:#e9eef6;"></div>
<svg style="position:absolute;left:486px;top:483px;" width="16" height="16" viewBox="0 0 16 16"><rect x="1" y="1" width="14" height="14" fill="#d8a020" stroke="#444" stroke-width="1.5"/></svg>
<svg style="position:absolute;left:512px;top:483px;" width="16" height="17" viewBox="0 0 16 17"><path d="M1 1 L10 8.5 L1 16Z" fill="#b0b0b0"/><rect x="12.5" y="1" width="2.5" height="15" fill="#8a8a8a"/></svg>
<div style="left:535.3px;top:480px;width:1px;height:25px;background:#cfd0d8;"></div>
<div style="left:540px;top:478px;width:24.5px;height:25.5px;box-sizing:border-box;border:1.5px solid #3d9bf0;background:#e9eef6;"></div>
<svg style="position:absolute;left:543px;top:482px;" width="19" height="19" viewBox="0 0 19 19"><rect x="2" y="1" width="14" height="12" fill="#fff" stroke="#1aa01a" stroke-width="1.4"/><path d="M6.5 1 L6.5 13 M11.5 1 L11.5 13" stroke="#1aa01a" stroke-width="1.4"/><path d="M1 16 L17 16" stroke="#e02020" stroke-width="1.5"/><path d="M2 18 L4 15 L6 18Z M8 18 L10 15 L12 18Z M14 18 L16 15 L18 18Z" fill="#e02020"/></svg>
<svg style="position:absolute;left:569px;top:482px;" width="19" height="19" viewBox="0 0 19 19"><rect x="2" y="1" width="14" height="12" fill="#fff" stroke="#2a7ad8" stroke-width="1.4"/><path d="M6.5 1 L6.5 13 M11.5 1 L11.5 13" stroke="#2a7ad8" stroke-width="1.4"/><path d="M1 16 L17 16" stroke="#e02020" stroke-width="1.5"/><path d="M2 18 L4 15 L6 18Z M8 18 L10 15 L12 18Z M14 18 L16 15 L18 18Z" fill="#e02020"/></svg>
<div style="left:588.5px;top:480px;width:1px;height:25px;background:#cfd0d8;"></div>
<div style="left:598px;top:479px;width:116px;height:25.5px;box-sizing:border-box;border:1px solid #cccedb;background:#fff;"></div>
<div class="t" style="left:601.8px;top:485.7px;font-size:14.5px;line-height:14.5px;letter-spacing:0.078px;color:#1e1e1e;">20 Frames</div>
<svg style="position:absolute;left:699px;top:489px;" width="10" height="6" viewBox="0 0 10 6"><path d="M0 0 L9 0 L4.5 4.5Z" fill="#717171"/></svg>
<div style="left:713.5px;top:479px;width:116px;height:25.5px;box-sizing:border-box;border:1px solid #cccedb;background:#fff;"></div>
<div class="t" style="left:717.3px;top:485.7px;font-size:14.5px;line-height:14.5px;letter-spacing:0.183px;color:#1e1e1e;">2 Sec (Auto)</div>
<svg style="position:absolute;left:815px;top:489px;" width="10" height="6" viewBox="0 0 10 6"><path d="M0 0 L9 0 L4.5 4.5Z" fill="#717171"/></svg>
<div style="left:833.7px;top:480px;width:1px;height:25px;background:#cfd0d8;"></div>
<svg style="position:absolute;left:839px;top:482px;" width="20" height="19" viewBox="0 0 20 19"><rect x="1" y="2" width="17" height="12" fill="#fff" stroke="#555" stroke-width="1.2"/><path d="M1 4 L18 4" stroke="#555" stroke-width="2"/><path d="M4 10 Q9 4 14 8" fill="none" stroke="#e02020" stroke-width="1.8"/><rect x="8" y="10" width="10" height="8" fill="#2a7ad8"/><rect x="10" y="11" width="6" height="3" fill="#fff"/></svg>
<div style="left:865.9px;top:480px;width:1px;height:25px;background:#cfd0d8;"></div>
<svg style="position:absolute;left:874px;top:483px;" width="17" height="17" viewBox="0 0 17 17"><circle cx="7" cy="7" r="5.5" fill="none" stroke="#a8a8a8" stroke-width="1.5"/><path d="M11 11 L15.5 15.5" stroke="#a8a8a8" stroke-width="2"/><path d="M5.5 4.5 L9.5 7 L5.5 9.5Z" fill="#b8b8b8"/></svg>
<svg style="position:absolute;left:899.5px;top:484px;" width="18" height="16" viewBox="0 0 18 16"><rect x="1.0" y="1.0" width="2.4" height="4" fill="#e02020"/><rect x="4.4" y="1.0" width="2.4" height="4" fill="#e02020"/><rect x="7.8" y="1.0" width="2.4" height="4" fill="#e02020"/><rect x="11.2" y="1.0" width="2.4" height="4" fill="#e02020"/><rect x="14.6" y="1.0" width="2.4" height="4" fill="#e02020"/><rect x="1.0" y="6.0" width="2.4" height="4" fill="#20b020"/><rect x="4.4" y="6.0" width="2.4" height="4" fill="#20b020"/><rect x="7.8" y="6.0" width="2.4" height="4" fill="#20b020"/><rect x="11.2" y="6.0" width="2.4" height="4" fill="#20b020"/><rect x="14.6" y="6.0" width="2.4" height="4" fill="#20b020"/><rect x="1.0" y="11.0" width="2.4" height="4" fill="#2050e0"/><rect x="4.4" y="11.0" width="2.4" height="4" fill="#2050e0"/><rect x="7.8" y="11.0" width="2.4" height="4" fill="#2050e0"/><rect x="11.2" y="11.0" width="2.4" height="4" fill="#2050e0"/><rect x="14.6" y="11.0" width="2.4" height="4" fill="#2050e0"/></svg>
<svg style="position:absolute;left:924px;top:483px;" width="20" height="17" viewBox="0 0 20 17"><path d="M2 8 L14 3 L17 7 L5 12Z" fill="#a8a8a8"/><path d="M5 12 L4 16 L1 16" fill="none" stroke="#a8a8a8" stroke-width="1.5"/><circle cx="16" cy="10" r="2" fill="#a8a8a8"/></svg>
<div style="left:949.3px;top:480px;width:1px;height:25px;background:#cfd0d8;"></div>
<svg style="position:absolute;left:957px;top:484px;" width="18" height="15" viewBox="0 0 18 15"><rect x="1" y="1" width="16" height="13" fill="#d8d8d8" stroke="#888" stroke-width="1"/><path d="M1 3.5 L17 3.5 M1 11.5 L17 11.5" stroke="#777" stroke-width="1" stroke-dasharray="1.2 1"/><path d="M4 7.5 L14 7.5" stroke="#777" stroke-width="1.5"/></svg>
<svg style="position:absolute;left:983px;top:484px;" width="18" height="15" viewBox="0 0 18 15"><rect x="1" y="1" width="16" height="13" fill="#d8d8d8" stroke="#888" stroke-width="1"/><path d="M1 3.5 L17 3.5 M1 11.5 L17 11.5" stroke="#777" stroke-width="1" stroke-dasharray="1.2 1"/><path d="M4 7.5 L14 7.5" stroke="#777" stroke-width="1.5"/></svg>
<div style="left:1007px;top:480px;width:1px;height:25px;background:#cfd0d8;"></div>
<svg style="position:absolute;left:1015px;top:483px;" width="18" height="17" viewBox="0 0 18 17"><path d="M2 1 L2 15 L17 15" fill="none" stroke="#a8a8a8" stroke-width="1.3"/><path d="M4 14 L4 6 M6 14 L6 3 M8 14 L8 8 M10 14 L10 10 M12 14 L12 11" stroke="#b8b8b8" stroke-width="1.2"/></svg>
<svg style="position:absolute;left:0px;top:0px;pointer-events:none" width="1080" height="703" viewBox="0 0 1080 703"><line x1="425" y1="535.6" x2="1063" y2="535.6" stroke="#c8c8c8" stroke-width="1.3"/><line x1="434.5" y1="535.6" x2="434.5" y2="655.5" stroke="#d0d0d0" stroke-width="1.3"/><line x1="425.5" y1="647.2" x2="434.5" y2="647.2" stroke="#aaa" stroke-width="1.2"/><line x1="425.5" y1="618.8" x2="434.5" y2="618.8" stroke="#aaa" stroke-width="1.2"/><line x1="425.5" y1="590.4" x2="434.5" y2="590.4" stroke="#aaa" stroke-width="1.2"/><line x1="425.5" y1="561.9" x2="434.5" y2="561.9" stroke="#aaa" stroke-width="1.2"/><line x1="425.5" y1="535.6" x2="434.5" y2="535.6" stroke="#aaa" stroke-width="1.2"/><line x1="521.9" y1="649.2" x2="521.9" y2="656.2" stroke="#bbb" stroke-width="1.2"/><line x1="609.3" y1="649.2" x2="609.3" y2="656.2" stroke="#bbb" stroke-width="1.2"/><line x1="696.7" y1="649.2" x2="696.7" y2="656.2" stroke="#bbb" stroke-width="1.2"/><line x1="784.1" y1="649.2" x2="784.1" y2="656.2" stroke="#bbb" stroke-width="1.2"/><line x1="871.5" y1="649.2" x2="871.5" y2="656.2" stroke="#bbb" stroke-width="1.2"/><line x1="958.9" y1="649.2" x2="958.9" y2="656.2" stroke="#bbb" stroke-width="1.2"/><line x1="1063.8" y1="649.2" x2="1063.8" y2="656.2" stroke="#bbb" stroke-width="1.2"/><line x1="616" y1="648.4" x2="1063" y2="648.4" stroke="#e01010" stroke-width="1.3"/><line x1="434.5" y1="647.2" x2="1063" y2="647.2" stroke="#1010ff" stroke-width="1.4"/><line x1="434.5" y1="647.2" x2="1063" y2="535.6" stroke="#12a012" stroke-width="1.3"/><circle cx="434.7" cy="647.2" r="2.1" fill="#0a8a0a"/><rect x="433.09999999999997" y="645.6" width="3.2" height="3.2" fill="#0000e0"/><circle cx="436.5" cy="646.8" r="2.1" fill="#0a8a0a"/><rect x="434.9" y="645.6" width="3.2" height="3.2" fill="#0000e0"/><circle cx="438.5" cy="646.5" r="2.1" fill="#0a8a0a"/><rect x="436.9" y="645.6" width="3.2" height="3.2" fill="#0000e0"/><circle cx="440.5" cy="646.1" r="2.1" fill="#0a8a0a"/><rect x="438.9" y="645.6" width="3.2" height="3.2" fill="#0000e0"/><circle cx="443" cy="645.7" r="2.1" fill="#0a8a0a"/><rect x="441.4" y="645.6" width="3.2" height="3.2" fill="#0000e0"/><circle cx="446.8" cy="645.0" r="2.1" fill="#0a8a0a"/><rect x="445.2" y="645.6" width="3.2" height="3.2" fill="#0000e0"/><circle cx="453.3" cy="643.9" r="2.1" fill="#0a8a0a"/><rect x="451.7" y="645.6" width="3.2" height="3.2" fill="#0000e0"/><circle cx="464.3" cy="641.9" r="2.1" fill="#0a8a0a"/><rect x="462.7" y="645.6" width="3.2" height="3.2" fill="#0000e0"/><circle cx="477.9" cy="639.5" r="2.1" fill="#0a8a0a"/><rect x="476.29999999999995" y="645.6" width="3.2" height="3.2" fill="#0000e0"/><circle cx="501.6" cy="635.3" r="2.1" fill="#0a8a0a"/><rect x="500.0" y="645.6" width="3.2" height="3.2" fill="#0000e0"/><circle cx="534.2" cy="629.5" r="2.1" fill="#0a8a0a"/><rect x="532.6" y="645.6" width="3.2" height="3.2" fill="#0000e0"/><circle cx="585.2" cy="620.4" r="2.1" fill="#0a8a0a"/><rect x="583.6" y="645.6" width="3.2" height="3.2" fill="#0000e0"/><circle cx="648" cy="609.3" r="2.1" fill="#0a8a0a"/><rect x="646.4" y="645.6" width="3.2" height="3.2" fill="#0000e0"/><circle cx="710.6" cy="598.2" r="2.1" fill="#0a8a0a"/><rect x="709.0" y="645.6" width="3.2" height="3.2" fill="#0000e0"/><circle cx="773.2" cy="587.1" r="2.1" fill="#0a8a0a"/><rect x="771.6" y="645.6" width="3.2" height="3.2" fill="#0000e0"/><circle cx="836.5" cy="575.8" r="2.1" fill="#0a8a0a"/><rect x="834.9" y="645.6" width="3.2" height="3.2" fill="#0000e0"/><circle cx="898.8" cy="564.8" r="2.1" fill="#0a8a0a"/><rect x="897.1999999999999" y="645.6" width="3.2" height="3.2" fill="#0000e0"/><circle cx="961.4" cy="553.6" r="2.1" fill="#0a8a0a"/><rect x="959.8" y="645.6" width="3.2" height="3.2" fill="#0000e0"/><circle cx="1024.4" cy="542.5" r="2.1" fill="#0a8a0a"/><rect x="1022.8000000000001" y="645.6" width="3.2" height="3.2" fill="#0000e0"/><circle cx="1063" cy="535.6" r="2.1" fill="#0a8a0a"/><rect x="1061.4" y="645.6" width="3.2" height="3.2" fill="#0000e0"/><rect x="1061.5" y="529" width="3.5" height="118.5" fill="#000"/></svg>
<div class="t" style="left:374.1px;top:532.5px;font-size:10px;line-height:10px;letter-spacing:0.203px;color:#505050;">1.9633e-7</div>
<div class="t" style="left:391.4px;top:559.5px;font-size:10px;line-height:10px;letter-spacing:0.180px;color:#505050;">1.5e-7</div>
<div class="t" style="left:396.4px;top:587.5px;font-size:10px;line-height:10px;letter-spacing:0.369px;color:#505050;">1.e-7</div>
<div class="t" style="left:395.8px;top:616.3px;font-size:10px;line-height:10px;letter-spacing:0.512px;color:#505050;">5.e-8</div>
<div class="t" style="left:410.8px;top:644.1px;font-size:10px;line-height:10px;letter-spacing:1.975px;color:#505050;">0.</div>
<div class="t" style="left:430.1px;top:661.5px;font-size:10px;line-height:10px;letter-spacing:1.975px;color:#505050;">0.</div>
<div class="t" style="left:518.1px;top:661.5px;font-size:10px;line-height:10px;letter-spacing:0.750px;color:#505050;">5.e+5</div>
<div class="t" style="left:605.2px;top:661.5px;font-size:10px;line-height:10px;letter-spacing:0.844px;color:#505050;">1.e+6</div>
<div class="t" style="left:692.2px;top:661.5px;font-size:10px;line-height:10px;letter-spacing:0.665px;color:#505050;">1.5e+6</div>
<div class="t" style="left:780.5px;top:661.5px;font-size:10px;line-height:10px;letter-spacing:0.781px;color:#505050;">2.e+6</div>
<div class="t" style="left:868.0px;top:661.5px;font-size:10px;line-height:10px;letter-spacing:0.615px;color:#505050;">2.5e+6</div>
<div class="t" style="left:955.6px;top:661.5px;font-size:10px;line-height:10px;letter-spacing:0.750px;color:#505050;">3.e+6</div>
<div class="t" style="left:1028.1px;top:661.5px;font-size:10px;line-height:10px;letter-spacing:0.590px;color:#505050;">3.6e+6</div>
<div class="t" style="left:1029.8px;top:516.1px;font-size:10px;line-height:10px;letter-spacing:0.645px;color:#222;font-weight:bold;">3.6e+6</div>
<div class="t" style="left:740.8px;top:685.5px;font-size:13.5px;line-height:13.5px;letter-spacing:0.491px;color:#111;font-weight:bold;">[s]</div>
<div class="t" style="left:316.5px;top:580.5px;width:90px;height:17px;font-size:17px;line-height:17px;font-weight:bold;color:#111;transform:rotate(-90deg);transform-origin:45px 8.5px;text-align:center;letter-spacing:1.5px">[mm/mm]</div>
<svg style="position:absolute;left:0px;top:0px;pointer-events:none" width="1080" height="703" viewBox="0 0 1080 703"><path d="M880 633 C871 633 865.5 639 865.5 646 C865.5 650 867.5 653 870.5 655 L869.5 659 L874 657 C876 657.7 878 658 880 658 C889 658 894.5 652 894.5 645.5 C894.5 639 889 633 880 633 Z" fill="#fff" stroke="#8a8a8a" stroke-width="1.4"/><circle cx="874.5" cy="643.5" r="1.3" fill="none" stroke="#7a7a9a" stroke-width="1"/><circle cx="886.5" cy="643.5" r="1.3" fill="none" stroke="#7a7a9a" stroke-width="1"/><path d="M894 646 C886 646 881 651 881 657.5 C881 664 886 669 894 669 C896 669 897.5 668.7 899 668 L903 670.5 L902 666.5 C905 664.5 907 661 907 657.5 C907 651 902 646 894 646 Z" fill="#fff" stroke="#8a8a8a" stroke-width="1.4"/><circle cx="889.5" cy="654.5" r="1.2" fill="none" stroke="#8a8a8a" stroke-width="1"/><circle cx="898.5" cy="654.5" r="1.2" fill="none" stroke="#8a8a8a" stroke-width="1"/><path d="M917 655 L940 655" fill="none" stroke="#8a8a8a" stroke-width="4.800000000000001" stroke-linecap="square"/><path d="M917 655 L940 655" fill="none" stroke="#fff" stroke-width="3.2" stroke-linecap="square"/><path d="M946 648 L958 648 M952 644 L952 657 M946 652 L958 652 M949 657 L949 663 M952 657 L957 657 M944 665 Q950 662 968 666" fill="none" stroke="#8a8a8a" stroke-width="4.2" stroke-linecap="square"/><path d="M946 648 L958 648 M952 644 L952 657 M946 652 L958 652 M949 657 L949 663 M952 657 L957 657 M944 665 Q950 662 968 666" fill="none" stroke="#fff" stroke-width="2.6" stroke-linecap="square"/><path d="M959 645 L966 645 L966 654 L959 654 L959 660 Q959 662 962 662 L967 662" fill="none" stroke="#8a8a8a" stroke-width="4.2" stroke-linecap="square"/><path d="M959 645 L966 645 L966 654 L959 654 L959 660 Q959 662 962 662 L967 662" fill="none" stroke="#fff" stroke-width="2.6" stroke-linecap="square"/><path d="M1023 647 L1023 662 M1023 648 L1030 648 L1030 660 L1023 660" fill="none" stroke="#8a8a8a" stroke-width="4.2" stroke-linecap="square"/><path d="M1023 647 L1023 662 M1023 648 L1030 648 L1030 660 L1023 660" fill="none" stroke="#fff" stroke-width="2.6" stroke-linecap="square"/><path d="M1032 645 L1042 645 L1042 654 L1032 654 M1037 645 L1037 654 M1032 645 L1032 664 Q1032 666 1036 666 L1044 666" fill="none" stroke="#8a8a8a" stroke-width="4.2" stroke-linecap="square"/><path d="M1032 645 L1042 645 L1042 654 L1032 654 M1037 645 L1037 654 M1032 645 L1032 664 Q1032 666 1036 666 L1044 666" fill="none" stroke="#fff" stroke-width="2.6" stroke-linecap="square"/></svg>
<div class="t" style="left:964.5px;top:638px;font-size:31px;line-height:31px;color:#fff;-webkit-text-stroke:1.3px #8a8a8a;letter-spacing:-3.2px;transform:scaleX(0.92);transform-origin:0 0">CAE</div>
</body></html>
